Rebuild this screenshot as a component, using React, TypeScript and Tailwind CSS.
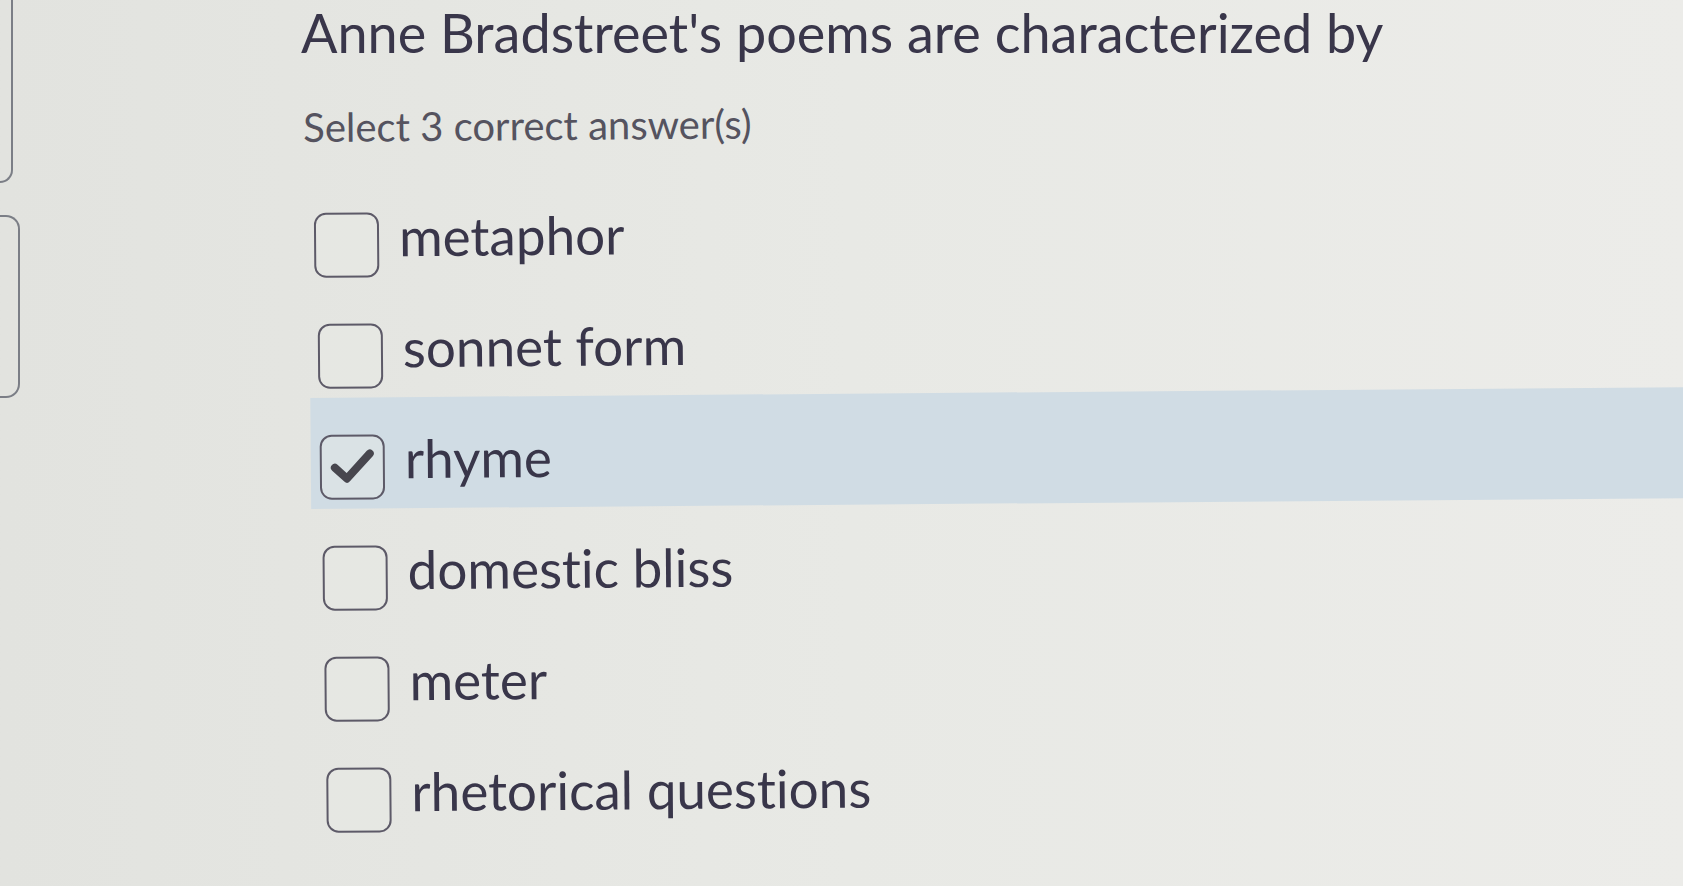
import React from "react";

const options = [
  { label: "metaphor", checked: false, pad: "pl-[5px]" },
  { label: "sonnet form", checked: false, pad: "pl-[8px]" },
  { label: "rhyme", checked: true, pad: "pl-[9px]" },
  { label: "domestic bliss", checked: false, pad: "pl-[11px]" },
  { label: "meter", checked: false, pad: "pl-[12px]" },
  { label: "rhetorical questions", checked: false, pad: "pl-[13px]" },
];

function Checkbox({ checked }: { checked: boolean }) {
  return (
    <div className="h-[65px] w-[65px] shrink-0 rounded-[12px] border-2 border-[#5d5a68] bg-[#e9eae7]/40">
      {checked && (
        <svg viewBox="0 0 61 61" className="h-full w-full">
          <path
            d="M13 31 L25 42 L48 17"
            fill="none"
            stroke="#47464e"
            strokeWidth="8"
            strokeLinecap="round"
            strokeLinejoin="round"
          />
        </svg>
      )}
    </div>
  );
}

export default function App() {
  return (
    <div
      className="flex h-[886px] w-full overflow-hidden bg-gradient-to-r from-[#e2e3df] via-[#e8e9e5] to-[#ecece9] text-[#39364a] [font-variant-ligatures:none]"
      style={{ fontFamily: "Lato, 'Noto Sans', sans-serif" }}
    >
      {/* cut-off panels at the left edge */}
      <div className="flex w-[300px] shrink-0 flex-col">
        <div className="h-[183px] w-[13px] rounded-br-[14px] border-b-2 border-r-2 border-[#7b7e86]" />
        <div className="mt-[32px] h-[183px] w-[20px] rounded-r-[14px] border-2 border-l-0 border-[#7b7e86]" />
      </div>

      <div className="flex min-w-0 flex-1 flex-col">
        <h1 className="pl-[1px] text-[54px] font-normal leading-[66px] whitespace-nowrap">
          Anne Bradstreet's poems are characterized by
        </h1>

        <div className="mt-[37px] flex origin-top-left rotate-[-0.45deg] flex-col">
          <p className="pl-[3px] text-[40px] leading-[48px] text-[#55535f]">
            Select 3 correct answer(s)
          </p>

          <ul className="mt-[25px] ml-[8px] flex flex-col">
            {options.map((o) => (
              <li
                key={o.label}
                className={`flex h-[111px] items-start gap-[20px] pt-[37px] ${o.pad} ${
                  o.checked ? "bg-[#d0dce4]" : ""
                }`}
              >
                <Checkbox checked={o.checked} />
                <span className="text-[53px] leading-[48px] whitespace-nowrap">{o.label}</span>
              </li>
            ))}
          </ul>
        </div>
      </div>
    </div>
  );
}
